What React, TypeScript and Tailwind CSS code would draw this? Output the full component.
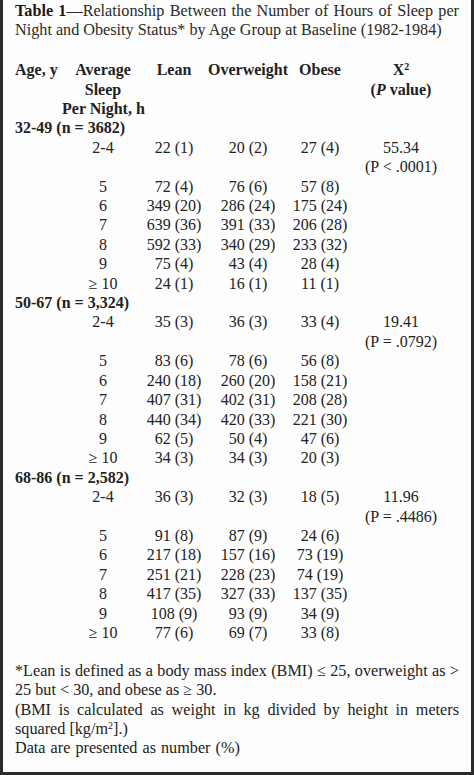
import React from "react"

type Row = { sleep: string; lean: string; over: string; obese: string; chi?: string; p?: string }

type Group = { label: string; rows: Row[] }

const groups: Group[] = [
  {
    label: "32-49 (n = 3682)",
    rows: [
      { sleep: "2-4", lean: "22 (1)", over: "20 (2)", obese: "27 (4)", chi: "55.34", p: "(P < .0001)" },
      { sleep: "5", lean: "72 (4)", over: "76 (6)", obese: "57 (8)" },
      { sleep: "6", lean: "349 (20)", over: "286 (24)", obese: "175 (24)" },
      { sleep: "7", lean: "639 (36)", over: "391 (33)", obese: "206 (28)" },
      { sleep: "8", lean: "592 (33)", over: "340 (29)", obese: "233 (32)" },
      { sleep: "9", lean: "75 (4)", over: "43 (4)", obese: "28 (4)" },
      { sleep: "≥ 10", lean: "24 (1)", over: "16 (1)", obese: "11 (1)" },
    ],
  },
  {
    label: "50-67 (n = 3,324)",
    rows: [
      { sleep: "2-4", lean: "35 (3)", over: "36 (3)", obese: "33 (4)", chi: "19.41", p: "(P = .0792)" },
      { sleep: "5", lean: "83 (6)", over: "78 (6)", obese: "56 (8)" },
      { sleep: "6", lean: "240 (18)", over: "260 (20)", obese: "158 (21)" },
      { sleep: "7", lean: "407 (31)", over: "402 (31)", obese: "208 (28)" },
      { sleep: "8", lean: "440 (34)", over: "420 (33)", obese: "221 (30)" },
      { sleep: "9", lean: "62 (5)", over: "50 (4)", obese: "47 (6)" },
      { sleep: "≥ 10", lean: "34 (3)", over: "34 (3)", obese: "20 (3)" },
    ],
  },
  {
    label: "68-86 (n = 2,582)",
    rows: [
      { sleep: "2-4", lean: "36 (3)", over: "32 (3)", obese: "18 (5)", chi: "11.96", p: "(P = .4486)" },
      { sleep: "5", lean: "91 (8)", over: "87 (9)", obese: "24 (6)" },
      { sleep: "6", lean: "217 (18)", over: "157 (16)", obese: "73 (19)" },
      { sleep: "7", lean: "251 (21)", over: "228 (23)", obese: "74 (19)" },
      { sleep: "8", lean: "417 (35)", over: "327 (33)", obese: "137 (35)" },
      { sleep: "9", lean: "108 (9)", over: "93 (9)", obese: "34 (9)" },
      { sleep: "≥ 10", lean: "77 (6)", over: "69 (7)", obese: "33 (8)" },
    ],
  },
]

const cols = "grid grid-cols-[47px_82px_60px_88px_56px_106px] text-center"

function DataRow({ row }: { row: Row }) {
  return (
    <>
      <div className={cols}>
        <div />
        <div>{row.sleep}</div>
        <div className="whitespace-nowrap">{row.lean}</div>
        <div className="whitespace-nowrap">{row.over}</div>
        <div className="whitespace-nowrap">{row.obese}</div>
        <div>{row.chi}</div>
      </div>
      {row.p && (
        <div className={cols}>
          <div className="col-start-6 whitespace-nowrap">{row.p}</div>
        </div>
      )}
    </>
  )
}

export default function App() {
  return (
    <div
      className="h-[775px] w-[474px] bg-[#fdfdfd] border-l-[3px] border-r-[3px] border-b-[3px] border-[#2b2b2b] pl-[12px] pr-[12px] pt-[2px] text-[16px] leading-[19.4px] text-[#222]"
      style={{ fontFamily: '"Liberation Serif", "Times New Roman", serif' }}
    >
      <div className="text-[16.2px] text-[#2a2a2a]">
        <div className="whitespace-nowrap text-justify [text-align-last:justify]">
          <span className="font-bold text-[#1a1a1a]">Table 1</span>—Relationship Between the Number of Hours of Sleep per
        </div>
        <div className="whitespace-nowrap">Night and Obesity Status* by Age Group at Baseline (1982-1984)</div>
      </div>

      <div className="mt-[19.4px] font-bold">
        <div className={cols}>
          <div className="text-left whitespace-nowrap">Age, y</div>
          <div>Average</div>
          <div>Lean</div>
          <div>Overweight</div>
          <div>Obese</div>
          <div>
            X<sup className="text-[10px]">2</sup>
          </div>
        </div>
        <div className={cols}>
          <div />
          <div>Sleep</div>
          <div />
          <div />
          <div />
          <div>
            (<span className="italic">P</span> value)
          </div>
        </div>
        <div className={cols}>
          <div />
          <div className="whitespace-nowrap">Per Night, h</div>
        </div>
      </div>

      {groups.map((g) => (
        <div key={g.label}>
          <div className="font-bold">{g.label}</div>
          {g.rows.map((r, i) => (
            <DataRow key={i} row={r} />
          ))}
        </div>
      ))}

      <div className="mt-[19.4px] text-[16.2px]">
        <div className="whitespace-nowrap text-justify [text-align-last:justify]">
          *Lean is defined as a body mass index (BMI) ≤ 25, overweight as &gt;
        </div>
        <div>25 but &lt; 30, and obese as ≥ 30.</div>
        <div className="whitespace-nowrap text-justify [text-align-last:justify]">
          (BMI is calculated as weight in kg divided by height in meters
        </div>
        <div>
          squared [kg/m<sup className="text-[10px]">2</sup>].)
        </div>
        <div className="[word-spacing:1px]">Data are presented as number (%)</div>
      </div>
    </div>
  )
}
